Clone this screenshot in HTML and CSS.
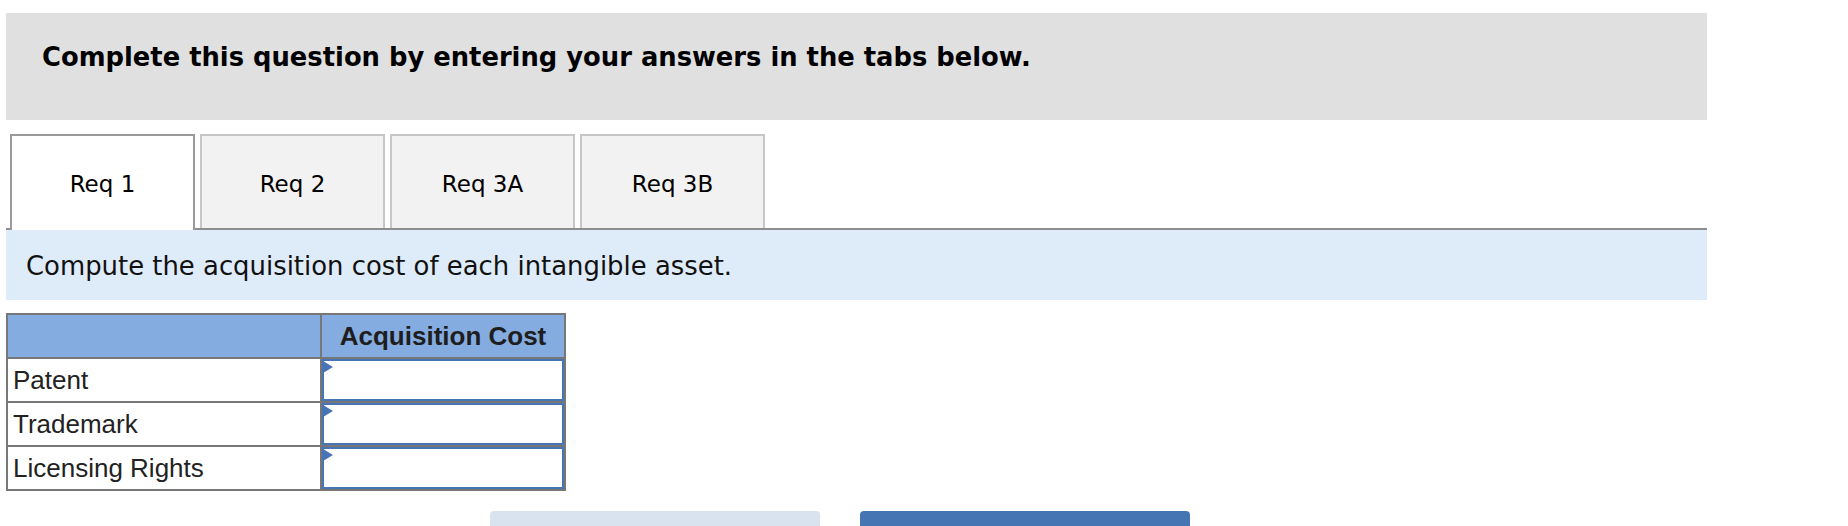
FILE: index.html
```html
<!DOCTYPE html>
<html lang="en">
<head>
<meta charset="utf-8">
<title>Req 1</title>
<link rel="stylesheet" href="styles.css">
</head>
<body>
<div class="wrap">
  <div class="banner">
    <h1 class="banner-title">Complete this question by entering your answers in the tabs below.</h1>
  </div>

  <div class="tabs">
    <div class="tab tab-active">Req 1</div>
    <div class="tab">Req 2</div>
    <div class="tab">Req 3A</div>
    <div class="tab">Req 3B</div>
  </div>

  <div class="instruction">Compute the acquisition cost of each intangible asset.</div>

  <table class="grid">
    <thead>
      <tr>
        <th class="head-blank"></th>
        <th class="head-col">Acquisition Cost</th>
      </tr>
    </thead>
    <tbody>
      <tr>
        <td class="label">Patent</td>
        <td class="entry"><span class="flag"></span><input class="field" type="text" aria-label="Patent acquisition cost"></td>
      </tr>
      <tr>
        <td class="label">Trademark</td>
        <td class="entry"><span class="flag"></span><input class="field" type="text" aria-label="Trademark acquisition cost"></td>
      </tr>
      <tr>
        <td class="label">Licensing Rights</td>
        <td class="entry"><span class="flag"></span><input class="field" type="text" aria-label="Licensing Rights acquisition cost"></td>
      </tr>
    </tbody>
  </table>

  <div class="nav">
    <button class="nav-btn nav-prev" type="button" aria-label="Previous: Req 1"></button>
    <button class="nav-btn nav-next" type="button" aria-label="Next: Req 2"></button>
  </div>
</div>
</body>
</html>
```

FILE: styles.css
```css
html, body {
  margin: 0;
  padding: 0;
  background: #ffffff;
}

body {
  font-family: "DejaVu Sans", Verdana, sans-serif;
  color: #000;
  overflow: hidden;
}

.wrap {
  margin-left: 6px;
  width: 1701px;
  padding-top: 13px;
}

.banner {
  background: #e0e0e0;
  height: 107px;
  box-sizing: border-box;
  padding: 29px 0 0 36px;
}

.banner-title {
  margin: 0;
  font-family: "DejaVu Sans", Verdana, sans-serif;
  font-weight: bold;
  font-size: 25.8px;
  line-height: 30px;
  color: #000;
}

.tabs {
  margin-top: 14px;
  display: flex;
  gap: 5px;
  padding-left: 4px;
  border-bottom: 2px solid #8e8e8e;
  height: 94px;
}

.tab {
  width: 185px;
  height: 94px;
  box-sizing: border-box;
  border: 2px solid #c6c6c6;
  border-bottom: none;
  background: #f2f2f2;
  display: flex;
  align-items: center;
  justify-content: center;
  padding-top: 4px;
  font-size: 23px;
  color: #000;
}

.tab-active {
  height: 96px;
  background: #ffffff;
  border-color: #9a9a9a;
  position: relative;
  z-index: 1;
  padding-top: 2px;
}

.instruction {
  background: #deebf8;
  height: 70px;
  box-sizing: border-box;
  padding: 2px 0 0 20px;
  display: flex;
  align-items: center;
  font-size: 25.9px;
  color: #111;
}

.grid {
  margin-top: 13px;
  border-collapse: collapse;
  font-family: "Liberation Sans", Arial, sans-serif;
  font-size: 26px;
  color: #222;
}

.grid th,
.grid td {
  border: 2px solid #777777;
  padding: 0;
}

.grid thead th {
  background: #84ace0;
  height: 42px;
  font-weight: bold;
  text-align: center;
  color: #1e1e1e;
}

.head-blank {
  width: 312px;
}

.head-col {
  width: 242px;
}

.grid tbody td {
  height: 42px;
}

.grid td.label {
  padding-left: 5px;
  text-align: left;
  vertical-align: middle;
}

.entry {
  position: relative;
}

.field {
  display: block;
  width: 100%;
  height: 42px;
  box-sizing: border-box;
  border: 2px solid #4674b4;
  margin: 0;
  padding: 0 6px;
  font: inherit;
  background: #fff;
  outline: none;
}

.flag {
  position: absolute;
  left: 1px;
  top: 2px;
  z-index: 2;
  width: 0;
  height: 0;
  border-left: 10px solid #4674b4;
  border-top: 6px solid transparent;
  border-bottom: 6px solid transparent;
}

.nav {
  margin-top: 20px;
  margin-left: 484px;
  display: flex;
  gap: 40px;
}

.nav-btn {
  width: 330px;
  height: 52px;
  border: none;
  border-radius: 4px 4px 0 0;
  padding: 0;
  margin: 0;
}

.nav-prev {
  background: #d9e3ef;
}

.nav-next {
  background: #4575b2;
}
```
